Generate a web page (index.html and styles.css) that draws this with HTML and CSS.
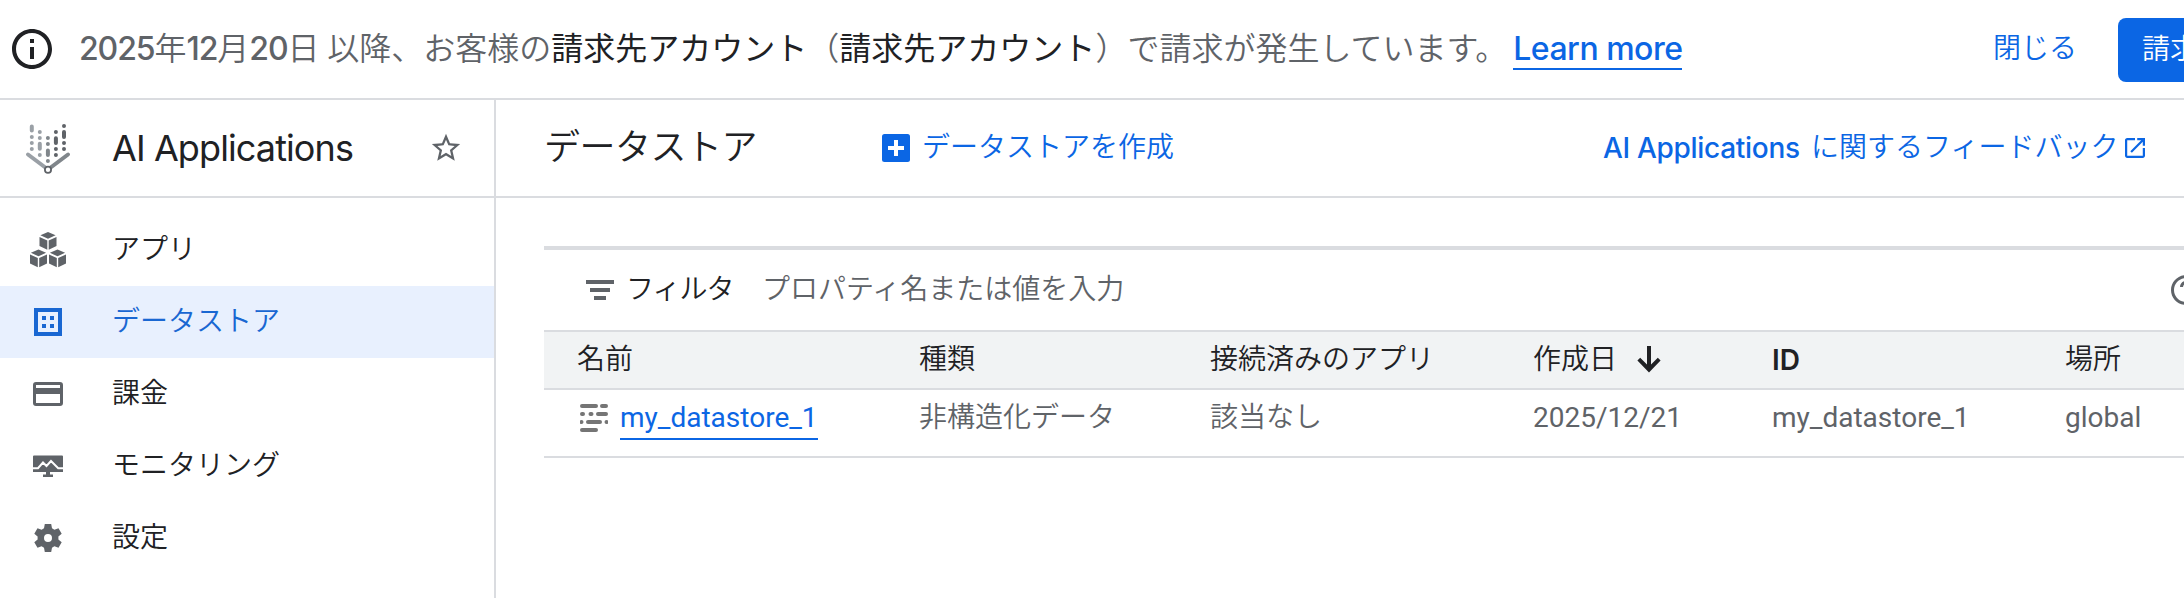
FILE: index.html
```
<!DOCTYPE html>
<html lang="ja">

<head>
  <title>データストア - AI Applications</title>
  <meta charset="utf-8">
  <link rel="stylesheet" href="styles.css">
</head>

<body>
  <div class="banner">
    <svg class="banner-icon" viewBox="0 0 24 24"><path d="M11 7h2v2h-2zm0 4h2v6h-2zm1-9C6.48 2 2 6.48 2 12s4.48 10 10 10 10-4.48 10-10S17.52 2 12 2zm0 18c-4.41 0-8-3.59-8-8s3.59-8 8-8 8 3.59 8 8-3.59 8-8 8z"/></svg>
    <p class="banner-text"><b class="num">2025</b>年<b class="num">12</b>月<b class="num">20</b>日 以降、お客様の<strong>請求先アカウント</strong>（<strong>請求先アカウント</strong>）で請求が発生しています。<a class="learn-more" href="#">Learn more</a></p>
    <a class="dismiss" href="#">閉じる</a>
    <button class="billing">請求</button>
  </div>

  <div class="layout">
    <nav class="sidebar">
      <div class="product">
        <svg class="logo" viewBox="0 0 48 54">
          <g fill="none" stroke-width="4" stroke-linecap="round">
            <path stroke="#9aa0a6" d="M7.8 5.4v4.2M7.8 16v0M7.8 22v0M7.8 28v0M15.8 11v0M15.8 17v0M15.8 22.8v5M15.8 34v0M4 33.5l20 15"/>
            <path stroke="#80868b" d="M23.9 17v0M23.9 23v0M23.9 29.4v4.7M23.9 40v0M44 33.5l-20 15"/>
            <path stroke="#5f6368" d="M31.9 11v0M31.9 17.2v4.8M31.9 28v0M31.9 34v0M40 5v0M40 11v5M40 22v0M40 28v0"/>
          </g>
          <circle cx="24" cy="48.7" r="3.1" fill="#fff" stroke="#5f6368" stroke-width="1.8"/>
        </svg>
        <span class="product-name">AI Applications</span>
        <svg class="star" viewBox="0 0 24 24"><path d="M22 9.24l-7.19-.62L12 2 9.19 8.63 2 9.24l5.46 4.73L5.82 21 12 17.27 18.18 21l-1.63-7.03L22 9.24zM12 15.4l-3.76 2.27 1-4.28-3.32-2.88 4.38-.38L12 6.1l1.71 4.04 4.38.38-3.32 2.88 1 4.28L12 15.4z"/></svg>
      </div>
      <ul class="menu">
        <li>
          <svg viewBox="0 0 36 36">
            <g id="cube">
              <path d="M18 0l7.6 3.3L18 6.800l-7.600-3.500z"/>
              <path d="M9.500 5l7.800 3.400v9.300l-7.800-3.800zM26.500 5l-7.800 3.400v9.300l7.800-3.800z"/>
            </g>
            <use href="#cube" x="-9.500" y="17.500"/>
            <use href="#cube" x="9.500" y="17.500"/>
          </svg>
          <span>アプリ</span>
        </li>
        <li class="active">
          <svg viewBox="0 0 36 36"><path fill-rule="evenodd" d="M4 4h28v28H4zM8 8v20h20V8z"/><path d="M12 12h4v4h-4zM20 12h4v4h-4zM12 20h4v4h-4zM20 20h4v4h-4z"/></svg>
          <span>データストア</span>
        </li>
        <li>
          <svg viewBox="0 0 36 36"><path fill-rule="evenodd" d="M6 6h24q3 0 3 3v18q0 3-3 3H6q-3 0-3-3V9q0-3 3-3zM6 9v3h24V9zM6 18v9h24v-9z"/></svg>
          <span>課金</span>
        </li>
        <li>
          <svg viewBox="0 0 36 36"><path d="M4 7.500h28q1 0 1 1V24H20v2.500h3V29H13v-2.500h3V24H3V8.500q0-1 1-1z"/><path class="trace" d="M3 20.200h5l5-5.700 3.500 3.500 4.500-5 7.200 7.200H33"/></svg>
          <span>モニタリング</span>
        </li>
        <li>
          <svg viewBox="0 0 36 36"><path fill-rule="evenodd" d="M14.800 4h6.400l.8 4.300 2.400 1.400 4.100-1.500 3.200 5.500-3.300 2.800v3l3.300 2.800-3.200 5.500-4.100-1.500-2.400 1.400-.8 4.300h-6.400l-.8-4.300-2.400-1.400-4.100 1.500-3.200-5.500 3.300-2.800v-3l-3.300-2.800 3.200-5.500 4.100 1.500L14 8.300zM18 14a4 4 0 1 0 0 8 4 4 0 0 0 0-8z"/></svg>
          <span>設定</span>
        </li>
      </ul>
    </nav>

    <main>
      <header class="toolbar">
        <h1>データストア</h1>
        <a class="create" href="#">
          <svg viewBox="0 0 28 28"><rect width="28" height="28" rx="2.500"/><path fill="#fff" d="M12 6h4v6h6v4h-6v6h-4v-6H6v-4h6z"/></svg>
          <span>データストアを作成</span>
        </a>
        <a class="feedback" href="#">
          <b>AI Applications</b>
          <span>に関するフィードバック</span>
          <svg viewBox="0 0 18 18"><path d="M16 16H2V2h7V0H2C.9 0 0 .9 0 2v14c0 1.100.9 2 2 2h14c1.100 0 2-.9 2-2V9h-2v7zM11 0v2h3.600l-9.830 9.830 1.410 1.410L16 3.410V7h2V0h-7z"/></svg>
        </a>
      </header>

      <section class="stores">
        <div class="filter">
          <svg class="filter-icon" viewBox="0 0 28 20"><path d="M0 0h28v4H0zM4 8h20v4H4zM8 16h12v4H8z"/></svg>
          <span class="filter-label">フィルタ</span>
          <span class="filter-hint">プロパティ名または値を入力</span>
          <svg class="help" viewBox="0 0 24 24"><path d="M11 18h2v-2h-2v2zm1-16C6.480 2 2 6.480 2 12s4.480 10 10 10 10-4.480 10-10S17.520 2 12 2zm0 18c-4.410 0-8-3.590-8-8s3.590-8 8-8 8 3.590 8 8-3.590 8-8 8zm0-14c-2.210 0-4 1.790-4 4h2c0-1.100.9-2 2-2s2 .9 2 2c0 2-3 1.750-3 5h2c0-2.250 3-2.500 3-5 0-2.210-1.790-4-4-4z"/></svg>
        </div>
        <div class="row head">
          <span>名前</span>
          <span>種類</span>
          <span>接続済みのアプリ</span>
          <span class="sorted">作成日 <svg viewBox="0 0 24 27"><path d="M10 0h4v18.500l6.800-6.800L23.600 14.500 12 26.500.4 14.500l2.800-2.800L10 18.500z"/></svg></span>
          <span><b>ID</b></span>
          <span>場所</span>
        </div>
        <div class="row">
          <span class="store">
            <svg viewBox="0 0 28 28"><path d="M2 2h14M22 2h4M2 10h1M10.500 10h1M18 10h8M1.500 18h0M8 18h12M26.500 18h0M2 26h14"/></svg>
            <a href="#">my_datastore_1</a>
          </span>
          <span>非構造化データ</span>
          <span>該当なし</span>
          <span class="latin">2025/12/21</span>
          <span class="latin">my_datastore_1</span>
          <span class="latin">global</span>
        </div>
      </section>
    </main>
  </div>
</body>

</html>
```
FILE: styles.css
```
* {
  box-sizing: border-box;
}

body {
  margin: 0;
  height: 598px;
  overflow: hidden;
  background: #fff;
  color: #202124;
  font-family: Roboto, "Noto Sans CJK JP", sans-serif;
  font-size: 28px;
  font-weight: 350;
  line-height: 40px;
  white-space: nowrap;
}

a {
  color: #0b66e4;
  text-decoration: none;
}

svg {
  flex: none;
  fill: #5f6368;
}

b {
  font-family: Inter, sans-serif;
  font-weight: 500;
}

/* billing banner */
.banner {
  display: flex;
  align-items: center;
  height: 100px;
  padding-left: 8px;
  border-bottom: 2px solid #dadce0;
}

.banner-icon {
  width: 48px;
  height: 48px;
  fill: #202124;
}

.banner-text {
  flex: none;
  width: 1937px;
  margin: 0;
  padding-left: 23px;
  color: #5f6368;
  font-size: 32px;
}

.banner-text strong {
  color: #202124;
  font-weight: 400;
}

.num {
  letter-spacing: -1.1px;
}

.learn-more {
  margin-left: 6px;
  border-bottom: 2px solid #0b66e4;
  font-family: Inter, sans-serif;
  font-weight: 500;
  letter-spacing: -0.5px;
}

.dismiss {
  flex: none;
  width: 125px;
}

.billing {
  flex: none;
  width: 300px;
  height: 64px;
  margin-top: 2px;
  padding: 0 24px;
  border: none;
  border-radius: 8px;
  background: #0b66e4;
  color: #fff;
  font: inherit;
  text-align: left;
}

.layout {
  display: flex;
  height: 498px;
}

/* left navigation */
.sidebar {
  flex: none;
  width: 496px;
  border-right: 2px solid #dadce0;
}

.product {
  display: flex;
  align-items: center;
  height: 98px;
  padding: 0 31px 0 24px;
  border-bottom: 2px solid #dadce0;
}

.logo {
  width: 48px;
  height: 54px;
}

.product-name {
  flex: 1;
  padding-left: 40px;
  font-family: Inter, sans-serif;
  font-size: 36px;
  font-weight: 400;
  letter-spacing: -0.9px;
}

.star {
  width: 34px;
  height: 34px;
}

.menu {
  margin: 0;
  padding: 16px 0 0;
  list-style: none;
}

.menu li {
  display: flex;
  align-items: center;
  gap: 46px;
  height: 72px;
  padding-left: 30px;
}

.menu svg {
  width: 36px;
  height: 36px;
}

.menu .active {
  background: #e8f0fe;
  color: #1967d2;
}

.active svg {
  fill: #1967d2;
}

.trace {
  fill: none;
  stroke: #fff;
  stroke-width: 2;
}

/* page header */
main {
  flex: none;
  width: 1800px;
}

.toolbar {
  display: flex;
  align-items: center;
  height: 98px;
  padding-left: 48px;
  border-bottom: 2px solid #dadce0;
}

h1 {
  width: 338px;
  margin: 0;
  font-size: 36px;
  font-weight: 350;
  letter-spacing: -0.5px;
}

.create,
.feedback {
  display: flex;
  align-items: center;
}

.create {
  gap: 12px;
  width: 721px;
}

.create svg {
  width: 28px;
  height: 28px;
  fill: #0b66e4;
}

.feedback b {
  width: 208px;
  font-size: 28px;
  letter-spacing: -0.3px;
}

.feedback svg {
  width: 20px;
  height: 20px;
  margin-left: 7px;
  fill: #0b66e4;
}

/* table */
.stores {
  margin: 48px 0 0 48px;
  border-top: 4px solid #dadce0;
}

.filter {
  display: flex;
  align-items: center;
  height: 80px;
  padding-left: 42px;
}

.filter-icon {
  width: 28px;
  height: 20px;
}

.filter-label {
  width: 136px;
  margin-left: 12px;
  letter-spacing: -1px;
}

.filter-hint {
  width: 1406px;
  color: #5f6368;
}

.help {
  width: 36px;
  height: 36px;
}

.row {
  display: grid;
  grid-template-columns: 342px 291px 323px 239px 293px 200px;
  align-items: center;
  height: 68px;
  padding: 0 0 10px 33px;
  border-bottom: 2px solid #dadce0;
  color: #5f6368;
}

.latin {
  font-weight: 400;
}

.head {
  height: 60px;
  padding-bottom: 0;
  border-top: 2px solid #dadce0;
  background: #f1f3f4;
  color: #202124;
}

.head b {
  font-weight: 600;
}

.sorted svg {
  width: 24px;
  height: 27px;
  margin-left: 13px;
  fill: #202124;
  vertical-align: -4px;
}

.store {
  display: flex;
  align-items: center;
  gap: 12px;
}

.store svg {
  width: 28px;
  height: 28px;
  margin-left: 3px;
  fill: none;
  stroke: #757575;
  stroke-width: 4;
  stroke-linecap: round;
}

.store a {
  padding-top: 2px;
  border-bottom: 2px solid #0b66e4;
  font-weight: 400;
}
```
